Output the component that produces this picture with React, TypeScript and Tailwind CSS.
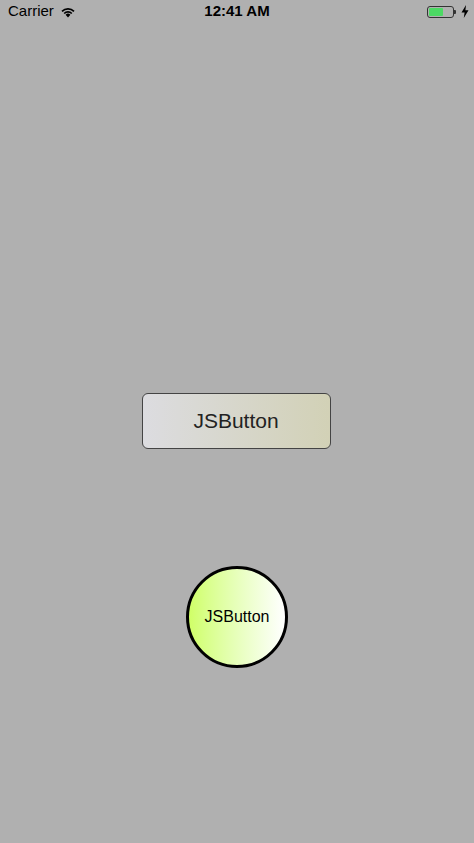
import React from "react";

export default function App() {
  return (
    <div
      className="w-[474px] h-[843px] bg-[#b0b0b0] flex flex-col"
      style={{ fontFamily: '"Liberation Sans", Arial, sans-serif' }}
    >
      <div className="h-[23px] flex items-center justify-between pl-[8px] pr-[5px] text-[15px] text-black relative">
        <div className="flex items-center gap-[6px]">
          <span>Carrier</span>
          <svg width="16" height="12" viewBox="0 0 16 12">
            <path d="M8 11.5 L5.6 8.8 A3.4 3.4 0 0 1 10.4 8.8 Z" fill="#000" />
            <path d="M3.6 6.9 A6.2 6.2 0 0 1 12.4 6.9 L11.2 8.1 A4.5 4.5 0 0 0 4.8 8.1 Z" fill="#000" />
            <path d="M1.4 4.7 A9.3 9.3 0 0 1 14.6 4.7 L13.4 5.9 A7.6 7.6 0 0 0 2.6 5.9 Z" fill="#000" />
          </svg>
        </div>
        <div className="absolute left-0 right-0 text-center font-bold text-[15px] pointer-events-none">
          12:41 AM
        </div>
        <div className="flex items-center gap-[3px]">
          <div className="w-[27px] h-[12px] border border-[#333] rounded-[3px] p-[1px] flex">
            <div className="w-[14px] h-full bg-[#4cd964] rounded-[1px]" />
          </div>
          <div className="w-[2px] h-[4px] bg-[#333] rounded-r-[1px] -ml-[3px]" />
          <svg width="8" height="13" viewBox="0 0 8 13" className="ml-[2px]">
            <path d="M5 0 L0.5 7.5 L3.6 7.5 L2.8 13 L7.5 5.3 L4.4 5.3 Z" fill="#000" />
          </svg>
        </div>
      </div>
      <div className="flex flex-col items-center">
        <div className="h-[370px]" />
        <div className="w-[189px] h-[56px] rounded-[6px] border border-[#444] bg-gradient-to-r from-[#dcdce0] to-[#d2d1b6] flex items-center justify-center text-[21px] text-[#222] -translate-x-[1px]">
          JSButton
        </div>
        <div className="h-[117px]" />
        <div className="w-[102px] h-[102px] rounded-full border-[3px] border-black bg-gradient-to-r from-[#d0ff66] to-white flex items-center justify-center text-[16px] text-black">
          JSButton
        </div>
      </div>
    </div>
  );
}
